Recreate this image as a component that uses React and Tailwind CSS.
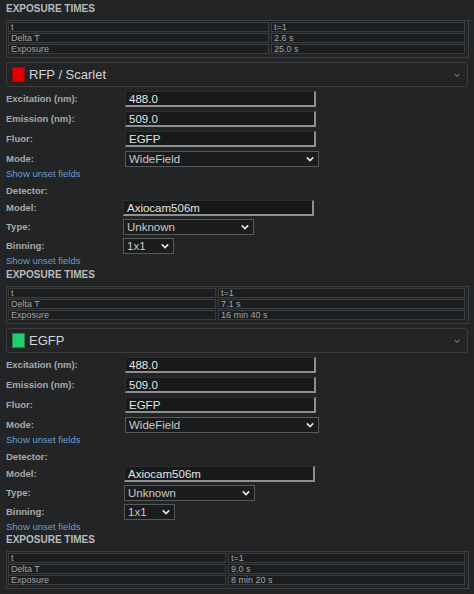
import React from "react";

const sections = [
  {
    times: { t: "t=1", delta: "2.6 s", exposure: "25.0 s" },
    split: 261,
    channel: { name: "RFP / Scarlet", color: "bg-[#e30000]" },
    formLeft: "w-[119px]",
    detLeft: "w-[117px]",
  },
  {
    times: { t: "t=1", delta: "7.1 s", exposure: "16 min 40 s" },
    split: 208,
    channel: { name: "EGFP", color: "bg-[#1fcf6e]" },
    formLeft: "w-[119px]",
    detLeft: "w-[118px]",
  },
];

const lastTimes = { t: "t=1", delta: "9.0 s", exposure: "8 min 20 s" };

const Heading = () => (
  <div className="text-[10px] leading-[11px] font-bold text-[#b9bbbd] uppercase">
    Exposure times
  </div>
);

const TimesTable = ({ times, split }) => {
  const rows = [
    ["t", times.t],
    ["Delta T", times.delta],
    ["Exposure", times.exposure],
  ];
  return (
    <div className="mt-[6px] w-[463px] border border-[#3b3e41] pl-[1px] pr-[3px] pt-[1px] pb-[3px]">
      <div className="flex flex-col gap-[1px]">
        {rows.map(([k, v]) => (
          <div key={k} className="flex gap-[2px]">
            <div
              className="h-[10px] border border-[#393c3f] bg-[#1b1d1f] pl-[2px] text-[9px] leading-[8px] text-[#a3a5a7]"
              style={{ width: split }}
            >
              {k}
            </div>
            <div className="flex-1 h-[10px] border border-[#393c3f] bg-[#1b1d1f] pl-[2px] text-[9px] leading-[8px] text-[#a3a5a7]">
              {v}
            </div>
          </div>
        ))}
      </div>
    </div>
  );
};

const Chevron = ({ className }) => (
  <svg viewBox="0 0 10 6" className={className} fill="none">
    <polyline points="1,1 5,5 9,1" stroke="currentColor" strokeWidth="2" />
  </svg>
);

const Input = ({ value, w }) => (
  <div
    className={`${w} h-[16px] bg-[#17191a] border-t border-l border-t-[#2b2d2f] border-l-[#2b2d2f] border-r-2 border-b-2 border-r-[#8e8f90] border-b-[#8e8f90] pl-[3px] text-[11.5px] leading-[14px] text-[#e4e5e6]`}
  >
    {value}
  </div>
);

const Select = ({ value, w }) => (
  <div
    className={`${w} h-[16px] bg-[#1a1c1d] border border-[#58595b] pl-[3px] pr-[4px] flex items-center justify-between text-[11.5px] text-[#c9cacb]`}
  >
    <span className="leading-[14px]">{value}</span>
    <Chevron className="w-[8px] h-[6px] text-[#e8e8e8]" />
  </div>
);

const Label = ({ children, w }) => (
  <div className={`${w} shrink-0 text-[9.5px] font-bold text-[#a7a9ab]`}>
    {children}
  </div>
);

const Row = ({ label, w, children }) => (
  <div className="flex items-center">
    <Label w={w}>{label}</Label>
    {children}
  </div>
);

const ShowUnset = () => (
  <div className="text-[9.5px] leading-[11px] text-[#6a9ccf]">
    Show unset fields
  </div>
);

const ChannelSection = ({ s }) => (
  <div className="pt-[3px]">
    <Heading />
    <TimesTable times={s.times} split={s.split} />
    <div className="mt-[4px] w-[462px] h-[25px] border border-[#3b3e41] rounded-[3px] flex items-center pl-[5px] pr-[7px]">
      <div className={`w-[13px] h-[15px] ${s.channel.color} border border-[#3a1414]/40`} />
      <div className="ml-[4px] flex-1 text-[13px] text-[#d3d4d5]">
        {s.channel.name}
      </div>
      <Chevron className="w-[6px] h-[4px] text-[#6b6e71]" />
    </div>
    <div className="mt-[4px] flex flex-col gap-[4px]">
      <Row label="Excitation (nm):" w={s.formLeft}>
        <Input value="488.0" w="w-[191px]" />
      </Row>
      <Row label="Emission (nm):" w={s.formLeft}>
        <Input value="509.0" w="w-[191px]" />
      </Row>
      <Row label="Fluor:" w={s.formLeft}>
        <Input value="EGFP" w="w-[191px]" />
      </Row>
      <Row label="Mode:" w={s.formLeft}>
        <Select value="WideField" w="w-[194px]" />
      </Row>
    </div>
    <div className="mt-[1px]">
      <ShowUnset />
    </div>
    <div className="mt-[6px] text-[9.5px] leading-[11px] font-bold text-[#a7a9ab]">
      Detector:
    </div>
    <div className="mt-[4px] flex flex-col gap-[3px]">
      <Row label="Model:" w={s.detLeft}>
        <Input value="Axiocam506m" w="w-[191px]" />
      </Row>
      <Row label="Type:" w={s.detLeft}>
        <Select value="Unknown" w="w-[131px]" />
      </Row>
      <Row label="Binning:" w={s.detLeft}>
        <Select value="1x1" w="w-[51px]" />
      </Row>
    </div>
    <div className="mt-[1px]">
      <ShowUnset />
    </div>
  </div>
);

export default function App() {
  return (
    <div
      className="w-[474px] h-[594px] overflow-hidden bg-[#222426] pl-[6px]"
      style={{ fontFamily: '"Liberation Sans", Arial, sans-serif' }}
    >
      {sections.map((s, i) => (
        <ChannelSection key={i} s={s} />
      ))}
      <div className="pt-[2px]">
        <Heading />
        <TimesTable times={lastTimes} split={218} />
      </div>
    </div>
  );
}
